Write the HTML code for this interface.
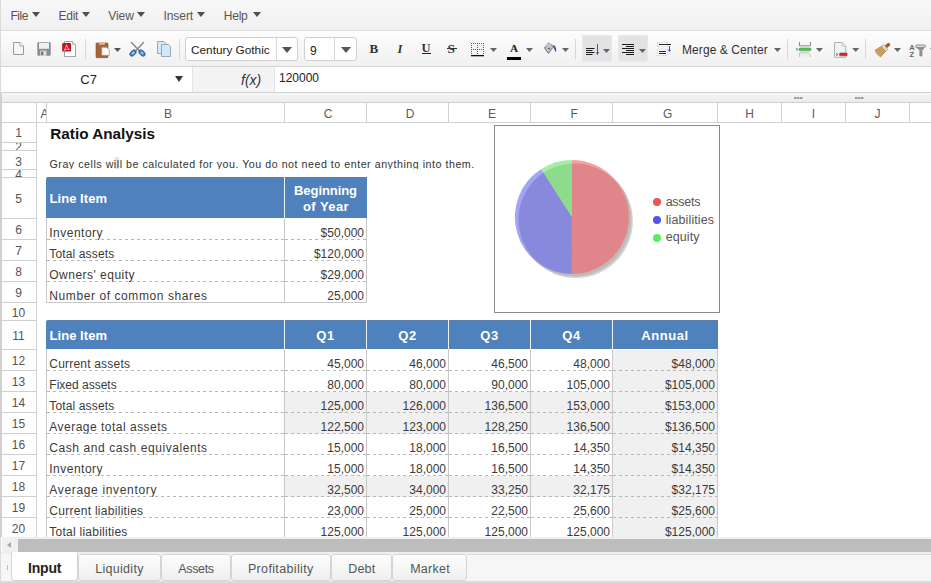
<!DOCTYPE html>
<html><head><meta charset="utf-8"><style>
*{box-sizing:border-box}
html,body{margin:0;padding:0}
body{width:931px;height:583px;overflow:hidden;position:relative;font-family:"Liberation Sans",sans-serif;background:#fff;color:#222}
.a{position:absolute}
.t{position:absolute;white-space:nowrap;line-height:1}
.hl{position:absolute;height:1px}
.vl{position:absolute;width:1px}
.dash{position:absolute;height:1px;background-image:linear-gradient(to right,#b8b8b8 0,#b8b8b8 3px,transparent 3px,transparent 6px);background-size:6px 1px}
.gv{position:absolute;width:1px;background:#c8c8c8}
.blue{position:absolute;background:#4f81bd}
.gray{position:absolute;background:#f0f0f0}
.tab{position:absolute;top:554px;height:27px;border:1px solid #d4d4d4;border-radius:3px;background:linear-gradient(#fdfdfd,#efefef)}
</style></head><body>
<div class="a" style="left:0;top:0;width:1px;height:583px;background:#dadada"></div>
<div class="a" style="left:1px;top:0;width:930px;height:30px;background:linear-gradient(#f8f8f8,#f0f0f0)"></div>
<div class="hl" style="left:1px;top:30px;width:930px;background:#dcdcdc"></div>
<div class="t" style="left:10.50px;top:9.54px;font-size:12px;color:#555;letter-spacing:-0.459px;">File</div>
<div class="a" style="left:31.6px;top:12px;width:0;height:0;border-left:4.8px solid transparent;border-right:4.8px solid transparent;border-top:5.2px solid #505050"></div>
<div class="t" style="left:58.60px;top:9.54px;font-size:12px;color:#555;letter-spacing:-0.319px;">Edit</div>
<div class="a" style="left:81.5px;top:12px;width:0;height:0;border-left:4.8px solid transparent;border-right:4.8px solid transparent;border-top:5.2px solid #505050"></div>
<div class="t" style="left:108.20px;top:9.54px;font-size:12px;color:#555;letter-spacing:-0.048px;">View</div>
<div class="a" style="left:137.4px;top:12px;width:0;height:0;border-left:4.8px solid transparent;border-right:4.8px solid transparent;border-top:5.2px solid #505050"></div>
<div class="t" style="left:163.50px;top:9.54px;font-size:12px;color:#555;letter-spacing:-0.069px;">Insert</div>
<div class="a" style="left:196.8px;top:12px;width:0;height:0;border-left:4.8px solid transparent;border-right:4.8px solid transparent;border-top:5.2px solid #505050"></div>
<div class="t" style="left:223.80px;top:9.54px;font-size:12px;color:#555;letter-spacing:-0.245px;">Help</div>
<div class="a" style="left:252.5px;top:12px;width:0;height:0;border-left:4.8px solid transparent;border-right:4.8px solid transparent;border-top:5.2px solid #505050"></div>
<div class="a" style="left:1px;top:31px;width:930px;height:35px;background:linear-gradient(#fdfdfd,#f0f0f0)"></div>
<div class="hl" style="left:1px;top:66px;width:930px;background:#d4d4d4"></div>
<svg class="a" style="left:0;top:0" width="931" height="67" viewBox="0 0 931 67">
<path d="M13.5,42.5 H20 L23.5,46 V54.5 H13.5 Z" fill="#f3f7f7" stroke="#9a9a9a" stroke-width="1"/>
<path d="M20,42.5 V46 H23.5" fill="#fff" stroke="#9a9a9a" stroke-width="0.8"/>
<rect x="37.3" y="42.3" width="13.4" height="13.4" rx="1" fill="#8c8c8c"/>
<rect x="39" y="43" width="10" height="6" fill="#f0f0f0"/>
<rect x="39" y="48.2" width="10" height="0.8" fill="#d8d8d8"/>
<rect x="40.2" y="50.6" width="6.3" height="5.1" fill="#dedede"/>
<rect x="41.2" y="51.6" width="2" height="3.4" fill="#6a6a6a"/>
<path d="M64.5,41.5 H72.5 L75.5,44.5 V56.5 H64.5 Z" fill="#fff" stroke="#9a9a9a" stroke-width="0.9"/>
<path d="M72.5,41.5 V44.5 H75.5" fill="#eef" stroke="#9a9a9a" stroke-width="0.7"/>
<rect x="62.2" y="43" width="8.9" height="8.6" rx="1.2" fill="#c5131b"/>
<path d="M66.6,44.8 Q66,48 64.2,50.2 Q66.8,48.6 69.4,49.6 Q67.3,47.8 66.6,44.8 Z" fill="none" stroke="#fbe" stroke-width="0.9"/>
<rect x="85" y="39" width="1" height="20" fill="#d8d8d8"/>
<rect x="96" y="43" width="12" height="14.7" rx="0.8" fill="#a5653a" stroke="#8a4f28" stroke-width="0.6"/>
<rect x="99" y="42.2" width="6" height="2.6" rx="1" fill="#e0b898"/>
<path d="M101.8,47.3 H106.8 L109.3,49.8 V55.3 H101.8 Z" fill="#fbfbfb" stroke="#8a9a9a" stroke-width="0.7"/>
<path d="M114,48 H121 L117.5,52 Z" fill="#555"/>
<path d="M131.5,42.5 L139.5,51 M143.5,42.5 L135.5,51" stroke="#8a8a8a" stroke-width="1.5" stroke-linecap="round"/>
<ellipse cx="133" cy="53" rx="3.8" ry="2.3" fill="#4a7cc4" stroke="#2f5a9a" stroke-width="0.8" transform="rotate(-45 133 53)"/>
<ellipse cx="142" cy="53" rx="3.8" ry="2.3" fill="#4a7cc4" stroke="#2f5a9a" stroke-width="0.8" transform="rotate(45 142 53)"/>
<ellipse cx="133" cy="53" rx="1.8" ry="0.9" fill="#a8c8ee" transform="rotate(-45 133 53)"/>
<ellipse cx="142" cy="53" rx="1.8" ry="0.9" fill="#a8c8ee" transform="rotate(45 142 53)"/>
<path d="M157.5,41.5 H164 L166,43.5 V53.5 H157.5 Z" fill="#d6e8f6" stroke="#8fa3b3" stroke-width="0.9"/>
<path d="M161.5,44.5 H168.5 L170.5,46.5 V56.5 H161.5 Z" fill="#d6e8f6" stroke="#8fa3b3" stroke-width="0.9"/>
<rect x="179" y="39" width="1" height="20" fill="#d8d8d8"/>
<rect x="185.5" y="37.5" width="112" height="23" rx="2.5" fill="#fff" stroke="#d0d0d0"/>
<rect x="276" y="38" width="1" height="22" fill="#d8d8d8"/>
<path d="M282,47 H292 L287,53 Z" fill="#555"/>
<rect x="304.5" y="37.5" width="52" height="23" rx="2.5" fill="#fff" stroke="#d0d0d0"/>
<rect x="334" y="38" width="1" height="22" fill="#d8d8d8"/>
<path d="M341,47 H351 L346,53 Z" fill="#555"/>
<rect x="471" y="43" width="1" height="1" fill="#555"/>
<rect x="471" y="45" width="1" height="1" fill="#555"/>
<rect x="471" y="47" width="1" height="1" fill="#555"/>
<rect x="471" y="49" width="1" height="1" fill="#555"/>
<rect x="471" y="51" width="1" height="1" fill="#555"/>
<rect x="471" y="53" width="1" height="1" fill="#555"/>
<rect x="473" y="43" width="1" height="1" fill="#555"/>
<rect x="473" y="49" width="1" height="1" fill="#555"/>
<rect x="475" y="43" width="1" height="1" fill="#555"/>
<rect x="475" y="49" width="1" height="1" fill="#555"/>
<rect x="477" y="43" width="1" height="1" fill="#555"/>
<rect x="477" y="45" width="1" height="1" fill="#555"/>
<rect x="477" y="47" width="1" height="1" fill="#555"/>
<rect x="477" y="49" width="1" height="1" fill="#555"/>
<rect x="477" y="51" width="1" height="1" fill="#555"/>
<rect x="477" y="53" width="1" height="1" fill="#555"/>
<rect x="479" y="43" width="1" height="1" fill="#555"/>
<rect x="479" y="49" width="1" height="1" fill="#555"/>
<rect x="481" y="43" width="1" height="1" fill="#555"/>
<rect x="481" y="49" width="1" height="1" fill="#555"/>
<rect x="483" y="43" width="1" height="1" fill="#555"/>
<rect x="483" y="45" width="1" height="1" fill="#555"/>
<rect x="483" y="47" width="1" height="1" fill="#555"/>
<rect x="483" y="49" width="1" height="1" fill="#555"/>
<rect x="483" y="51" width="1" height="1" fill="#555"/>
<rect x="483" y="53" width="1" height="1" fill="#555"/>
<rect x="471" y="55" width="13" height="1.3" fill="#111"/>
<path d="M490,48 H497 L493.5,52 Z" fill="#666"/>
<rect x="575" y="39" width="1" height="20" fill="#d8d8d8"/>
<rect x="507" y="57" width="14" height="3" fill="#000"/>
<path d="M526,48 H533 L529.5,52 Z" fill="#666"/>
<path d="M544.5,48 L548.5,42.5 L553.5,46.5 L548.5,53.5 Z" fill="#c4c4c4" stroke="#6a6a6a" stroke-width="0.9" stroke-linejoin="round"/>
<path d="M546,46 L548.5,42.5 L551,44.5" fill="none" stroke="#eee" stroke-width="0.7"/>
<circle cx="549" cy="48.5" r="0.8" fill="#333"/>
<path d="M553,45 Q557,46 556,52.5 Q554.5,50 553.5,47.5 Z" fill="#2f55a8"/>
<path d="M562,48 H569 L565.5,52 Z" fill="#666"/>
<rect x="582.5" y="35.5" width="29" height="26" fill="#e3e3e3" stroke="#e9e9e9"/>
<rect x="618.5" y="35.5" width="29" height="26" fill="#e3e3e3" stroke="#e9e9e9"/>
<rect x="586" y="48" width="8.5" height="1" fill="#1a1a1a"/>
<rect x="586" y="50" width="6.5" height="1" fill="#1a1a1a"/>
<rect x="586" y="52" width="8.5" height="1" fill="#1a1a1a"/>
<rect x="586" y="54" width="6.5" height="1" fill="#1a1a1a"/>
<rect x="597" y="44" width="1" height="9" fill="#3a5aa8"/>
<path d="M595.8,52.3 H599.2 L597.5,55 Z" fill="#3a5aa8"/>
<path d="M603,49 H610 L606.5,53 Z" fill="#666"/>
<rect x="622" y="44" width="12" height="1" fill="#1a1a1a"/>
<rect x="626" y="46" width="8" height="1" fill="#1a1a1a"/>
<rect x="622" y="48" width="12" height="1" fill="#1a1a1a"/>
<rect x="626" y="50" width="8" height="1" fill="#1a1a1a"/>
<rect x="622" y="52" width="12" height="1" fill="#1a1a1a"/>
<rect x="626" y="54" width="8" height="1" fill="#1a1a1a"/>
<path d="M639,49 H646 L642.5,53 Z" fill="#666"/>
<rect x="657.5" y="42.3" width="10.3" height="4.4" fill="#fff" stroke="#d0d0d0" stroke-width="0.6"/>
<rect x="659" y="44" width="12" height="1" fill="#222"/>
<rect x="657.5" y="49.2" width="10" height="6.2" fill="#fff" stroke="#d0d0d0" stroke-width="0.6"/>
<rect x="659" y="51" width="7" height="1" fill="#222"/>
<rect x="659" y="53" width="7" height="1" fill="#222"/>
<rect x="669" y="46" width="1" height="4.5" fill="#3a5aa8"/>
<path d="M667.8,49.8 H671.2 L669.5,52 Z" fill="#3a5aa8"/>
<path d="M774,48 H781 L777.5,52 Z" fill="#666"/>
<rect x="787" y="39" width="1" height="20" fill="#d8d8d8"/>
<path d="M799.5,42 V45.8 H810.5 V42" fill="none" stroke="#7a7a7a" stroke-width="0.9"/>
<rect x="799" y="48" width="12" height="2.8" rx="1.2" fill="#5cc05c" stroke="#3a9a3a" stroke-width="0.6"/>
<path d="M796,48.2 L797.9,49.4 L796,50.6" fill="none" stroke="#2a7a2a" stroke-width="0.7"/>
<path d="M799.5,57 V52.8 H808 L810.5,55 V57" fill="#eee" stroke="#b8b8b8" stroke-width="0.8"/>
<path d="M816,48 H823 L819.5,52 Z" fill="#666"/>
<path d="M834.5,42.5 H842 L845.8,46.3 V57.3 H834.5 Z" fill="#eef4f5" stroke="#a8a8a8" stroke-width="0.9"/>
<path d="M842,42.5 V46.3 H845.8" fill="none" stroke="#b8b8b8" stroke-width="0.6"/>
<rect x="839.5" y="53" width="7.7" height="2.8" rx="1" fill="#d42a2a" stroke="#a01818" stroke-width="0.5"/>
<path d="M836,53.2 L837.9,54.4 L836,55.6" fill="none" stroke="#a01818" stroke-width="0.7"/>
<path d="M852.2,48 H859.2 L855.7,52 Z" fill="#666"/>
<rect x="865" y="39" width="1" height="20" fill="#d8d8d8"/>
<g transform="translate(883.5,48.8) rotate(-40)">
<path d="M-7.5,-4.3 L0,-3.2 L0,3.2 L-7.5,4.3 Q-9,0 -7.5,-4.3 Z" fill="#d8a558" stroke="#a87838" stroke-width="0.6"/>
<path d="M-6.5,-2 H-1 M-6.5,0.3 H-1 M-6.5,2.5 H-1" stroke="#a8783a" stroke-width="0.5"/>
<rect x="0" y="-3.2" width="3" height="6.4" fill="#e6ded0" stroke="#8a7a6a" stroke-width="0.5"/>
<rect x="3" y="-1.6" width="5" height="3.2" rx="1" fill="#9c5a32"/>
</g>
<path d="M894,48 H901 L897.5,52 Z" fill="#666"/>
<text x="909.3" y="49.5" font-family="Liberation Sans" font-weight="bold" font-size="7.5" fill="#666">A</text>
<text x="909.5" y="56.8" font-family="Liberation Sans" font-weight="bold" font-size="7.5" fill="#666">Z</text>
<rect x="915.5" y="45" width="10" height="2.6" rx="1.3" fill="#ddd" stroke="#777" stroke-width="0.8"/>
<path d="M917.5,48 L919.8,50.5 V56 H922 V50.5 L924,48 Z" fill="#999" stroke="#777" stroke-width="0.6"/>
<path d="M930,48 H937 L933.5,52 Z" fill="#666"/>
</svg>
<div class="t" style="left:191px;top:45px;font-size:11.8px;color:#222">Century Gothic</div>
<div class="t" style="left:310px;top:44.5px;font-size:12px;color:#222">9</div>
<div class="t" style="left:369.5px;top:41.8px;font-size:13px;font-weight:bold;font-family:'Liberation Serif';color:#333">B</div>
<div class="t" style="left:397.5px;top:42.5px;font-size:12.5px;font-weight:bold;font-style:italic;font-family:'Liberation Serif';color:#333">I</div>
<div class="t" style="left:421.5px;top:41.5px;font-size:12.5px;font-weight:bold;font-family:'Liberation Serif';color:#333">U</div>
<div class="a" style="left:422px;top:53px;width:8.5px;height:1px;background:#222"></div>
<div class="t" style="left:447.5px;top:41.5px;font-size:13.5px;font-weight:bold;font-family:'Liberation Serif';color:#333">S</div>
<div class="a" style="left:447px;top:48px;width:10px;height:1px;background:#333"></div>
<div class="t" style="left:510px;top:43px;font-size:11.3px;font-weight:bold;font-family:'Liberation Serif';color:#222">A</div>
<div class="t" style="left:682px;top:43.5px;font-size:12px;color:#333;letter-spacing:0.08px">Merge &amp; Center</div>
<div class="a" style="left:1px;top:67px;width:191px;height:25px;background:#fff"></div>
<div class="t" style="left:80.30px;top:73.00px;font-size:13px;color:#222;">C7</div>
<div class="a" style="left:175px;top:76px;width:0;height:0;border-left:4.5px solid transparent;border-right:4.5px solid transparent;border-top:6px solid #333"></div>
<div class="a" style="left:192px;top:67px;width:83px;height:25px;background:#f4f4f4;border-left:1px solid #e4e4e4;border-right:1px solid #e4e4e4"></div>
<div class="t" style="left:241.00px;top:73.15px;font-size:14px;color:#333;font-style:italic;">f(x)</div>
<div class="t" style="left:279.00px;top:71.84px;font-size:12px;color:#222;">120000</div>
<div class="hl" style="left:1px;top:92px;width:930px;background:#d2d2d2"></div>
<div class="a" style="left:0;top:93px;width:931px;height:9px;background:linear-gradient(#f5f5f5,#ececec)"></div>
<div class="a" style="left:0;top:93px;width:2px;height:444px;background:#d0d0d0"></div>
<div class="hl" style="left:1px;top:102px;width:930px;background:#d0d0d0"></div>
<div class="a" style="left:794px;top:97px;width:9px;height:2px;background:repeating-linear-gradient(to right,#999 0,#999 2px,#c8c8c8 2px,#c8c8c8 3px)"></div>
<div class="a" style="left:854.5px;top:97px;width:9px;height:2px;background:repeating-linear-gradient(to right,#999 0,#999 2px,#c8c8c8 2px,#c8c8c8 3px)"></div>
<div class="hl" style="left:1px;top:122px;width:930px;background:#d0d0d0"></div>
<div class="vl" style="left:36px;top:103px;height:434px;background:#d0d0d0"></div>
<div class="vl" style="left:46px;top:103px;height:19px;background:#d0d0d0"></div>
<div class="vl" style="left:284px;top:103px;height:19px;background:#d0d0d0"></div>
<div class="vl" style="left:366px;top:103px;height:19px;background:#d0d0d0"></div>
<div class="vl" style="left:448px;top:103px;height:19px;background:#d0d0d0"></div>
<div class="vl" style="left:530px;top:103px;height:19px;background:#d0d0d0"></div>
<div class="vl" style="left:612px;top:103px;height:19px;background:#d0d0d0"></div>
<div class="vl" style="left:717px;top:103px;height:19px;background:#d0d0d0"></div>
<div class="vl" style="left:781px;top:103px;height:19px;background:#d0d0d0"></div>
<div class="vl" style="left:845px;top:103px;height:19px;background:#d0d0d0"></div>
<div class="vl" style="left:909px;top:103px;height:19px;background:#d0d0d0"></div>
<div class="t" style="left:37px;top:107.54px;width:9px;overflow:hidden;font-size:12px;color:#555;padding-left:3.5px">A</div>
<div class="t" style="left:49.60px;top:107.54px;font-size:12px;color:#5a5a5a;width:237px;text-align:center;">B</div>
<div class="t" style="left:287.60px;top:107.54px;font-size:12px;color:#5a5a5a;width:81px;text-align:center;">C</div>
<div class="t" style="left:369.60px;top:107.54px;font-size:12px;color:#5a5a5a;width:81px;text-align:center;">D</div>
<div class="t" style="left:451.60px;top:107.54px;font-size:12px;color:#5a5a5a;width:81px;text-align:center;">E</div>
<div class="t" style="left:533.60px;top:107.54px;font-size:12px;color:#5a5a5a;width:81px;text-align:center;">F</div>
<div class="t" style="left:615.60px;top:107.54px;font-size:12px;color:#5a5a5a;width:104px;text-align:center;">G</div>
<div class="t" style="left:718.00px;top:107.54px;font-size:12px;color:#5a5a5a;width:63px;text-align:center;">H</div>
<div class="t" style="left:782.00px;top:107.54px;font-size:12px;color:#5a5a5a;width:63px;text-align:center;">I</div>
<div class="t" style="left:846.00px;top:107.54px;font-size:12px;color:#5a5a5a;width:63px;text-align:center;">J</div>
<div class="hl" style="left:1px;top:142px;width:35px;background:#d0d0d0"></div>
<div class="t" style="left:1.00px;top:126.64px;font-size:12px;color:#555;width:35px;text-align:center;">1</div>
<div class="hl" style="left:1px;top:150px;width:35px;background:#d0d0d0"></div>
<div class="a" style="left:1px;top:143px;width:35px;height:7px;overflow:hidden">
<div class="t" style="left:0;top:-1.86px;font-size:12px;color:#555;width:35px;text-align:center">2</div></div>
<div class="hl" style="left:1px;top:169px;width:35px;background:#d0d0d0"></div>
<div class="t" style="left:1.00px;top:155.64px;font-size:12px;color:#555;width:35px;text-align:center;">3</div>
<div class="hl" style="left:1px;top:177px;width:35px;background:#d0d0d0"></div>
<div class="a" style="left:1px;top:170px;width:35px;height:7px;overflow:hidden">
<div class="t" style="left:0;top:-1.36px;font-size:12px;color:#555;width:35px;text-align:center">4</div></div>
<div class="hl" style="left:1px;top:218px;width:35px;background:#d0d0d0"></div>
<div class="t" style="left:1.00px;top:193.14px;font-size:12px;color:#555;width:35px;text-align:center;">5</div>
<div class="hl" style="left:1px;top:239px;width:35px;background:#d0d0d0"></div>
<div class="t" style="left:1.00px;top:224.14px;font-size:12px;color:#555;width:35px;text-align:center;">6</div>
<div class="hl" style="left:1px;top:260px;width:35px;background:#d0d0d0"></div>
<div class="t" style="left:1.00px;top:245.14px;font-size:12px;color:#555;width:35px;text-align:center;">7</div>
<div class="hl" style="left:1px;top:281px;width:35px;background:#d0d0d0"></div>
<div class="t" style="left:1.00px;top:266.14px;font-size:12px;color:#555;width:35px;text-align:center;">8</div>
<div class="hl" style="left:1px;top:302px;width:35px;background:#d0d0d0"></div>
<div class="t" style="left:1.00px;top:287.14px;font-size:12px;color:#555;width:35px;text-align:center;">9</div>
<div class="hl" style="left:1px;top:320px;width:35px;background:#d0d0d0"></div>
<div class="t" style="left:1.00px;top:306.64px;font-size:12px;color:#555;width:35px;text-align:center;">10</div>
<div class="hl" style="left:1px;top:349px;width:35px;background:#d0d0d0"></div>
<div class="t" style="left:1.00px;top:330.14px;font-size:12px;color:#555;width:35px;text-align:center;">11</div>
<div class="hl" style="left:1px;top:370px;width:35px;background:#d0d0d0"></div>
<div class="t" style="left:1.00px;top:355.14px;font-size:12px;color:#555;width:35px;text-align:center;">12</div>
<div class="hl" style="left:1px;top:391px;width:35px;background:#d0d0d0"></div>
<div class="t" style="left:1.00px;top:376.14px;font-size:12px;color:#555;width:35px;text-align:center;">13</div>
<div class="hl" style="left:1px;top:412px;width:35px;background:#d0d0d0"></div>
<div class="t" style="left:1.00px;top:397.14px;font-size:12px;color:#555;width:35px;text-align:center;">14</div>
<div class="hl" style="left:1px;top:433px;width:35px;background:#d0d0d0"></div>
<div class="t" style="left:1.00px;top:418.14px;font-size:12px;color:#555;width:35px;text-align:center;">15</div>
<div class="hl" style="left:1px;top:454px;width:35px;background:#d0d0d0"></div>
<div class="t" style="left:1.00px;top:439.14px;font-size:12px;color:#555;width:35px;text-align:center;">16</div>
<div class="hl" style="left:1px;top:475px;width:35px;background:#d0d0d0"></div>
<div class="t" style="left:1.00px;top:460.14px;font-size:12px;color:#555;width:35px;text-align:center;">17</div>
<div class="hl" style="left:1px;top:496px;width:35px;background:#d0d0d0"></div>
<div class="t" style="left:1.00px;top:481.14px;font-size:12px;color:#555;width:35px;text-align:center;">18</div>
<div class="hl" style="left:1px;top:517px;width:35px;background:#d0d0d0"></div>
<div class="t" style="left:1.00px;top:502.14px;font-size:12px;color:#555;width:35px;text-align:center;">19</div>
<div class="t" style="left:1.00px;top:523.14px;font-size:12px;color:#555;width:35px;text-align:center;">20</div>
<div class="t" style="left:50.30px;top:125.65px;font-size:15.3px;color:#111;font-weight:bold;letter-spacing:-0.012px;">Ratio Analysis</div>
<div class="a" style="left:114.5px;top:157px;width:4px;height:12px;background:#e4e4e4"></div>
<div class="a" style="left:47px;top:150px;width:500px;height:19px;overflow:hidden">
<div class="t" style="left:2.5px;top:8.77px;font-size:10.67px;color:#333;letter-spacing:0.527px">Gray cells will be calculated for you. You do not need to enter anything into them.</div></div>
<div class="blue" style="left:46px;top:177px;width:321px;height:41px;border-top:1px solid #5b7eab;border-top-left-radius:2px"></div>
<div class="a" style="left:284px;top:177px;width:1px;height:41px;background:#eef3f9"></div>
<div class="t" style="left:49.60px;top:192.00px;font-size:13px;color:#fff;font-weight:bold;letter-spacing:0.037px;">Line Item</div>
<div class="t" style="left:294.00px;top:184.20px;font-size:13px;color:#fff;font-weight:bold;letter-spacing:-0.061px;">Beginning</div>
<div class="t" style="left:303.00px;top:199.80px;font-size:13px;color:#fff;font-weight:bold;letter-spacing:0.411px;">of Year</div>
<div class="t" style="left:49.30px;top:226.84px;font-size:12px;color:#3a3a3a;letter-spacing:0.490px;">Inventory</div>
<div class="t" style="left:285.00px;top:226.84px;font-size:12px;color:#3a3a3a;width:79px;text-align:right;">$50,000</div>
<div class="dash" style="left:47px;top:239px;width:237px"></div>
<div class="dash" style="left:285px;top:239px;width:81px"></div>
<div class="t" style="left:49.30px;top:247.84px;font-size:12px;color:#3a3a3a;letter-spacing:0.136px;">Total assets</div>
<div class="t" style="left:285.00px;top:247.84px;font-size:12px;color:#3a3a3a;width:79px;text-align:right;">$120,000</div>
<div class="dash" style="left:47px;top:260px;width:237px"></div>
<div class="dash" style="left:285px;top:260px;width:81px"></div>
<div class="t" style="left:49.30px;top:268.84px;font-size:12px;color:#3a3a3a;letter-spacing:0.477px;">Owners' equity</div>
<div class="t" style="left:285.00px;top:268.84px;font-size:12px;color:#3a3a3a;width:79px;text-align:right;">$29,000</div>
<div class="dash" style="left:47px;top:281px;width:237px"></div>
<div class="dash" style="left:285px;top:281px;width:81px"></div>
<div class="t" style="left:49.30px;top:289.84px;font-size:12px;color:#3a3a3a;letter-spacing:0.585px;">Number of common shares</div>
<div class="t" style="left:285.00px;top:289.84px;font-size:12px;color:#3a3a3a;width:79px;text-align:right;">25,000</div>
<div class="hl" style="left:46px;top:302px;width:321px;background:#c8c8c8"></div>
<div class="gv" style="left:46px;top:218px;height:84px"></div>
<div class="gv" style="left:284px;top:218px;height:84px"></div>
<div class="gv" style="left:366px;top:218px;height:84px"></div>
<div class="blue" style="left:46px;top:320px;width:672px;height:29px;border-top:1px solid #5b7eab;border-top-left-radius:2px"></div>
<div class="a" style="left:284px;top:320px;width:1px;height:29px;background:#eef3f9"></div>
<div class="a" style="left:366px;top:320px;width:1px;height:29px;background:#eef3f9"></div>
<div class="a" style="left:448px;top:320px;width:1px;height:29px;background:#eef3f9"></div>
<div class="a" style="left:530px;top:320px;width:1px;height:29px;background:#eef3f9"></div>
<div class="a" style="left:612px;top:320px;width:1px;height:29px;background:#eef3f9"></div>
<div class="t" style="left:49.60px;top:329.10px;font-size:13px;color:#fff;font-weight:bold;letter-spacing:0.037px;">Line Item</div>
<div class="t" style="left:285.00px;top:329.10px;font-size:13px;color:#fff;font-weight:bold;letter-spacing:0.600px;width:81px;text-align:center;">Q1</div>
<div class="t" style="left:367.00px;top:329.10px;font-size:13px;color:#fff;font-weight:bold;letter-spacing:0.600px;width:81px;text-align:center;">Q2</div>
<div class="t" style="left:449.00px;top:329.10px;font-size:13px;color:#fff;font-weight:bold;letter-spacing:0.600px;width:81px;text-align:center;">Q3</div>
<div class="t" style="left:531.00px;top:329.10px;font-size:13px;color:#fff;font-weight:bold;letter-spacing:0.600px;width:81px;text-align:center;">Q4</div>
<div class="t" style="left:613.00px;top:329.10px;font-size:13px;color:#fff;font-weight:bold;letter-spacing:0.600px;width:104px;text-align:center;">Annual</div>
<div class="gray" style="left:613px;top:350px;width:104px;height:21px"></div>
<div class="gray" style="left:613px;top:371px;width:104px;height:21px"></div>
<div class="gray" style="left:285px;top:392px;width:327px;height:21px"></div>
<div class="gray" style="left:613px;top:392px;width:104px;height:21px"></div>
<div class="gray" style="left:285px;top:413px;width:327px;height:21px"></div>
<div class="gray" style="left:613px;top:413px;width:104px;height:21px"></div>
<div class="gray" style="left:613px;top:434px;width:104px;height:21px"></div>
<div class="gray" style="left:613px;top:455px;width:104px;height:21px"></div>
<div class="gray" style="left:285px;top:476px;width:327px;height:21px"></div>
<div class="gray" style="left:613px;top:476px;width:104px;height:21px"></div>
<div class="gray" style="left:613px;top:497px;width:104px;height:21px"></div>
<div class="gray" style="left:613px;top:518px;width:104px;height:20px"></div>
<div class="t" style="left:49.30px;top:357.84px;font-size:12px;color:#3a3a3a;letter-spacing:0.199px;">Current assets</div>
<div class="t" style="left:285.00px;top:357.84px;font-size:12px;color:#3a3a3a;width:79px;text-align:right;">45,000</div>
<div class="t" style="left:367.00px;top:357.84px;font-size:12px;color:#3a3a3a;width:79px;text-align:right;">46,000</div>
<div class="t" style="left:449.00px;top:357.84px;font-size:12px;color:#3a3a3a;width:79px;text-align:right;">46,500</div>
<div class="t" style="left:531.00px;top:357.84px;font-size:12px;color:#3a3a3a;width:79px;text-align:right;">48,000</div>
<div class="t" style="left:613.00px;top:357.84px;font-size:12px;color:#3a3a3a;width:102px;text-align:right;">$48,000</div>
<div class="dash" style="left:47px;top:370px;width:237px"></div>
<div class="dash" style="left:285px;top:370px;width:81px"></div>
<div class="dash" style="left:367px;top:370px;width:81px"></div>
<div class="dash" style="left:449px;top:370px;width:81px"></div>
<div class="dash" style="left:531px;top:370px;width:81px"></div>
<div class="dash" style="left:613px;top:370px;width:104px"></div>
<div class="t" style="left:49.30px;top:378.84px;font-size:12px;color:#3a3a3a;letter-spacing:-0.000px;">Fixed assets</div>
<div class="t" style="left:285.00px;top:378.84px;font-size:12px;color:#3a3a3a;width:79px;text-align:right;">80,000</div>
<div class="t" style="left:367.00px;top:378.84px;font-size:12px;color:#3a3a3a;width:79px;text-align:right;">80,000</div>
<div class="t" style="left:449.00px;top:378.84px;font-size:12px;color:#3a3a3a;width:79px;text-align:right;">90,000</div>
<div class="t" style="left:531.00px;top:378.84px;font-size:12px;color:#3a3a3a;width:79px;text-align:right;">105,000</div>
<div class="t" style="left:613.00px;top:378.84px;font-size:12px;color:#3a3a3a;width:102px;text-align:right;">$105,000</div>
<div class="dash" style="left:47px;top:391px;width:237px"></div>
<div class="dash" style="left:285px;top:391px;width:81px"></div>
<div class="dash" style="left:367px;top:391px;width:81px"></div>
<div class="dash" style="left:449px;top:391px;width:81px"></div>
<div class="dash" style="left:531px;top:391px;width:81px"></div>
<div class="dash" style="left:613px;top:391px;width:104px"></div>
<div class="t" style="left:49.30px;top:399.84px;font-size:12px;color:#3a3a3a;letter-spacing:0.136px;">Total assets</div>
<div class="t" style="left:285.00px;top:399.84px;font-size:12px;color:#3a3a3a;width:79px;text-align:right;">125,000</div>
<div class="t" style="left:367.00px;top:399.84px;font-size:12px;color:#3a3a3a;width:79px;text-align:right;">126,000</div>
<div class="t" style="left:449.00px;top:399.84px;font-size:12px;color:#3a3a3a;width:79px;text-align:right;">136,500</div>
<div class="t" style="left:531.00px;top:399.84px;font-size:12px;color:#3a3a3a;width:79px;text-align:right;">153,000</div>
<div class="t" style="left:613.00px;top:399.84px;font-size:12px;color:#3a3a3a;width:102px;text-align:right;">$153,000</div>
<div class="dash" style="left:47px;top:412px;width:237px"></div>
<div class="dash" style="left:285px;top:412px;width:81px"></div>
<div class="dash" style="left:367px;top:412px;width:81px"></div>
<div class="dash" style="left:449px;top:412px;width:81px"></div>
<div class="dash" style="left:531px;top:412px;width:81px"></div>
<div class="dash" style="left:613px;top:412px;width:104px"></div>
<div class="t" style="left:49.30px;top:420.84px;font-size:12px;color:#3a3a3a;letter-spacing:0.489px;">Average total assets</div>
<div class="t" style="left:285.00px;top:420.84px;font-size:12px;color:#3a3a3a;width:79px;text-align:right;">122,500</div>
<div class="t" style="left:367.00px;top:420.84px;font-size:12px;color:#3a3a3a;width:79px;text-align:right;">123,000</div>
<div class="t" style="left:449.00px;top:420.84px;font-size:12px;color:#3a3a3a;width:79px;text-align:right;">128,250</div>
<div class="t" style="left:531.00px;top:420.84px;font-size:12px;color:#3a3a3a;width:79px;text-align:right;">136,500</div>
<div class="t" style="left:613.00px;top:420.84px;font-size:12px;color:#3a3a3a;width:102px;text-align:right;">$136,500</div>
<div class="dash" style="left:47px;top:433px;width:237px"></div>
<div class="dash" style="left:285px;top:433px;width:81px"></div>
<div class="dash" style="left:367px;top:433px;width:81px"></div>
<div class="dash" style="left:449px;top:433px;width:81px"></div>
<div class="dash" style="left:531px;top:433px;width:81px"></div>
<div class="dash" style="left:613px;top:433px;width:104px"></div>
<div class="t" style="left:49.30px;top:441.84px;font-size:12px;color:#3a3a3a;letter-spacing:0.570px;">Cash and cash equivalents</div>
<div class="t" style="left:285.00px;top:441.84px;font-size:12px;color:#3a3a3a;width:79px;text-align:right;">15,000</div>
<div class="t" style="left:367.00px;top:441.84px;font-size:12px;color:#3a3a3a;width:79px;text-align:right;">18,000</div>
<div class="t" style="left:449.00px;top:441.84px;font-size:12px;color:#3a3a3a;width:79px;text-align:right;">16,500</div>
<div class="t" style="left:531.00px;top:441.84px;font-size:12px;color:#3a3a3a;width:79px;text-align:right;">14,350</div>
<div class="t" style="left:613.00px;top:441.84px;font-size:12px;color:#3a3a3a;width:102px;text-align:right;">$14,350</div>
<div class="dash" style="left:47px;top:454px;width:237px"></div>
<div class="dash" style="left:285px;top:454px;width:81px"></div>
<div class="dash" style="left:367px;top:454px;width:81px"></div>
<div class="dash" style="left:449px;top:454px;width:81px"></div>
<div class="dash" style="left:531px;top:454px;width:81px"></div>
<div class="dash" style="left:613px;top:454px;width:104px"></div>
<div class="t" style="left:49.30px;top:462.84px;font-size:12px;color:#3a3a3a;letter-spacing:0.490px;">Inventory</div>
<div class="t" style="left:285.00px;top:462.84px;font-size:12px;color:#3a3a3a;width:79px;text-align:right;">15,000</div>
<div class="t" style="left:367.00px;top:462.84px;font-size:12px;color:#3a3a3a;width:79px;text-align:right;">18,000</div>
<div class="t" style="left:449.00px;top:462.84px;font-size:12px;color:#3a3a3a;width:79px;text-align:right;">16,500</div>
<div class="t" style="left:531.00px;top:462.84px;font-size:12px;color:#3a3a3a;width:79px;text-align:right;">14,350</div>
<div class="t" style="left:613.00px;top:462.84px;font-size:12px;color:#3a3a3a;width:102px;text-align:right;">$14,350</div>
<div class="dash" style="left:47px;top:475px;width:237px"></div>
<div class="dash" style="left:285px;top:475px;width:81px"></div>
<div class="dash" style="left:367px;top:475px;width:81px"></div>
<div class="dash" style="left:449px;top:475px;width:81px"></div>
<div class="dash" style="left:531px;top:475px;width:81px"></div>
<div class="dash" style="left:613px;top:475px;width:104px"></div>
<div class="t" style="left:49.30px;top:483.84px;font-size:12px;color:#3a3a3a;letter-spacing:0.664px;">Average inventory</div>
<div class="t" style="left:285.00px;top:483.84px;font-size:12px;color:#3a3a3a;width:79px;text-align:right;">32,500</div>
<div class="t" style="left:367.00px;top:483.84px;font-size:12px;color:#3a3a3a;width:79px;text-align:right;">34,000</div>
<div class="t" style="left:449.00px;top:483.84px;font-size:12px;color:#3a3a3a;width:79px;text-align:right;">33,250</div>
<div class="t" style="left:531.00px;top:483.84px;font-size:12px;color:#3a3a3a;width:79px;text-align:right;">32,175</div>
<div class="t" style="left:613.00px;top:483.84px;font-size:12px;color:#3a3a3a;width:102px;text-align:right;">$32,175</div>
<div class="dash" style="left:47px;top:496px;width:237px"></div>
<div class="dash" style="left:285px;top:496px;width:81px"></div>
<div class="dash" style="left:367px;top:496px;width:81px"></div>
<div class="dash" style="left:449px;top:496px;width:81px"></div>
<div class="dash" style="left:531px;top:496px;width:81px"></div>
<div class="dash" style="left:613px;top:496px;width:104px"></div>
<div class="t" style="left:49.30px;top:504.84px;font-size:12px;color:#3a3a3a;letter-spacing:0.284px;">Current liabilities</div>
<div class="t" style="left:285.00px;top:504.84px;font-size:12px;color:#3a3a3a;width:79px;text-align:right;">23,000</div>
<div class="t" style="left:367.00px;top:504.84px;font-size:12px;color:#3a3a3a;width:79px;text-align:right;">25,000</div>
<div class="t" style="left:449.00px;top:504.84px;font-size:12px;color:#3a3a3a;width:79px;text-align:right;">22,500</div>
<div class="t" style="left:531.00px;top:504.84px;font-size:12px;color:#3a3a3a;width:79px;text-align:right;">25,600</div>
<div class="t" style="left:613.00px;top:504.84px;font-size:12px;color:#3a3a3a;width:102px;text-align:right;">$25,600</div>
<div class="dash" style="left:47px;top:517px;width:237px"></div>
<div class="dash" style="left:285px;top:517px;width:81px"></div>
<div class="dash" style="left:367px;top:517px;width:81px"></div>
<div class="dash" style="left:449px;top:517px;width:81px"></div>
<div class="dash" style="left:531px;top:517px;width:81px"></div>
<div class="dash" style="left:613px;top:517px;width:104px"></div>
<div class="t" style="left:49.30px;top:525.84px;font-size:12px;color:#3a3a3a;letter-spacing:0.249px;">Total liabilities</div>
<div class="t" style="left:285.00px;top:525.84px;font-size:12px;color:#3a3a3a;width:79px;text-align:right;">125,000</div>
<div class="t" style="left:367.00px;top:525.84px;font-size:12px;color:#3a3a3a;width:79px;text-align:right;">125,000</div>
<div class="t" style="left:449.00px;top:525.84px;font-size:12px;color:#3a3a3a;width:79px;text-align:right;">125,000</div>
<div class="t" style="left:531.00px;top:525.84px;font-size:12px;color:#3a3a3a;width:79px;text-align:right;">125,000</div>
<div class="t" style="left:613.00px;top:525.84px;font-size:12px;color:#3a3a3a;width:102px;text-align:right;">$125,000</div>
<div class="gv" style="left:46px;top:349px;height:188px"></div>
<div class="gv" style="left:284px;top:349px;height:188px"></div>
<div class="gv" style="left:366px;top:349px;height:188px"></div>
<div class="gv" style="left:448px;top:349px;height:188px"></div>
<div class="gv" style="left:530px;top:349px;height:188px"></div>
<div class="gv" style="left:612px;top:349px;height:188px"></div>
<div class="gv" style="left:717px;top:349px;height:188px"></div>
<div class="a" style="left:494px;top:125px;width:226px;height:188px;border:1px solid #8a8a8a;background:#fff"></div>
<svg class="a" style="left:0;top:0" width="931" height="583" viewBox="0 0 931 583"><circle cx="575.9" cy="221.0" r="57" fill="#d4d4d4"/><circle cx="574.4" cy="219.5" r="57" fill="#bcbcbc"/><path d="M571.9,217.0 L571.90,160.00 A57,57 0 0 1 571.90,274.00 Z" fill="#f0a4a4"/><path d="M571.9,217.0 L571.90,274.00 A57,57 0 0 1 541.27,168.93 Z" fill="#a4a4f4"/><path d="M571.9,217.0 L541.27,168.93 A57,57 0 0 1 571.90,160.00 Z" fill="#a6eca6"/><clipPath id="cp"><circle cx="574.5" cy="219.6" r="56"/></clipPath><g clip-path="url(#cp)"><path d="M571.9,217.0 L571.90,160.00 A57,57 0 0 1 571.90,274.00 Z" fill="#e0868a"/><path d="M571.9,217.0 L571.90,274.00 A57,57 0 0 1 541.27,168.93 Z" fill="#8888dc"/><path d="M571.9,217.0 L541.27,168.93 A57,57 0 0 1 571.90,160.00 Z" fill="#8cdc8c"/></g></svg>
<div class="a" style="left:653px;top:198.0px;width:8.4px;height:8.4px;border-radius:50%;background:#ee5555"></div>
<div class="t" style="left:665.70px;top:196.42px;font-size:12.5px;color:#555;letter-spacing:-0.271px;">assets</div>
<div class="a" style="left:653px;top:215.8px;width:8.4px;height:8.4px;border-radius:50%;background:#5555ee"></div>
<div class="t" style="left:665.70px;top:214.42px;font-size:12.5px;color:#555;letter-spacing:0.114px;">liabilities</div>
<div class="a" style="left:653px;top:233.6px;width:8.4px;height:8.4px;border-radius:50%;background:#55ee55"></div>
<div class="t" style="left:665.70px;top:231.42px;font-size:12.5px;color:#555;letter-spacing:0.107px;">equity</div>
<div class="a" style="left:2px;top:537px;width:929px;height:17px;background:#f0f0f0"></div>
<div class="a" style="left:18px;top:539px;width:913px;height:12.5px;background:#bdbdbd"></div>
<div class="a" style="left:7px;top:542px;width:0;height:0;border-top:3.5px solid transparent;border-bottom:3.5px solid transparent;border-right:4px solid #aaa"></div>
<div class="a" style="left:1px;top:552px;width:930px;height:31px;background:#f6f6f6"></div>
<div class="a" style="left:1px;top:552px;width:930px;height:2px;background:#efefef"></div>
<div class="hl" style="left:467px;top:554px;width:464px;background:#dadada"></div>
<div class="a" style="left:0;top:581px;width:931px;height:2px;background:#dadada"></div>
<div class="a" style="left:7px;top:565px;width:1px;height:5px;background:#bbb"></div>
<div class="a" style="left:11px;top:552px;width:67px;height:29px;background:#fff;border:1px solid #d4d4d4;border-top:none;border-radius:0 0 3px 3px"></div>
<div class="t" style="left:28.10px;top:561.45px;font-size:14px;color:#222;font-weight:bold;letter-spacing:-0.221px;">Input</div>
<div class="tab" style="left:78px;width:83px"></div>
<div class="t" style="left:95.30px;top:563.02px;font-size:12.5px;color:#555;letter-spacing:0.282px;">Liquidity</div>
<div class="tab" style="left:161px;width:70px"></div>
<div class="t" style="left:178.30px;top:563.02px;font-size:12.5px;color:#555;letter-spacing:-0.352px;">Assets</div>
<div class="tab" style="left:231px;width:100px"></div>
<div class="t" style="left:247.90px;top:563.02px;font-size:12.5px;color:#555;letter-spacing:0.351px;">Profitability</div>
<div class="tab" style="left:331px;width:61px"></div>
<div class="t" style="left:348.30px;top:563.02px;font-size:12.5px;color:#555;letter-spacing:0.149px;">Debt</div>
<div class="tab" style="left:392px;width:75px"></div>
<div class="t" style="left:410.20px;top:563.02px;font-size:12.5px;color:#555;letter-spacing:0.266px;">Market</div>
</body></html>
